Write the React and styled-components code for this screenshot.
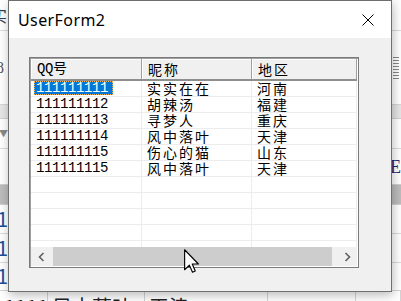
import React from 'react'
import styled, { createGlobalStyle } from 'styled-components'

const GlobalStyle = createGlobalStyle`
  html, body {
    margin: 0;
    padding: 0;
    background: #fff;
  }
  body {
    width: 401px;
    height: 301px;
    overflow: hidden;
  }
`

const mono = `"Liberation Mono", "Noto Sans CJK SC", monospace`
const cjk = `"Noto Sans CJK SC", "Liberation Sans", sans-serif`

const Screen = styled.div`
  position: relative;
  width: 401px;
  height: 301px;
  overflow: hidden;
  background: #fff;
`

// spreadsheet behind the form
const Sheet = styled.div`
  display: flex;
  flex-direction: column;
  height: 100%;
`
const Band = styled.div`
  height: ${(p) => p.h}px;
  flex: none;
  box-sizing: border-box;
  background: ${(p) => p.bg || '#fff'};
  border-bottom: 1px solid ${(p) => p.line || '#dcdcdc'};
  display: flex;
  align-items: center;
  justify-content: space-between;
  overflow: hidden;
`
const EdgeText = styled.span`
  font-family: ${(p) => (p.serif ? '"Liberation Serif", serif' : cjk)};
  font-size: ${(p) => p.size || 16}px;
  color: ${(p) => p.color || '#333'};
  margin-left: ${(p) => p.shift || 0}px;
  line-height: 1;
`
const LinesIcon = styled.div`
  width: 6px;
  height: 22px;
  margin-right: 2px;
  background: repeating-linear-gradient(#888 0 1px, transparent 1px 3px);
`
const SheetRow = styled.div`
  height: 30px;
  flex: none;
  display: flex;
  border-top: 1px solid #d4d4d4;
`
const SheetCell = styled.div`
  width: ${(p) => (p.w ? `${p.w}px` : 'auto')};
  flex: ${(p) => (p.w ? 'none' : '1')};
  box-sizing: border-box;
  border-right: 1px solid #d4d4d4;
  padding: 3px 4px 0;
  text-align: ${(p) => (p.right ? 'right' : 'left')};
  font-family: ${cjk};
  font-size: 20px;
  color: #222;
  line-height: 26px;
  white-space: nowrap;
  overflow: hidden;
`

// the user form
const Dialog = styled.div`
  position: absolute;
  left: 8px;
  top: 0;
  width: 384px;
  height: 292px;
  box-sizing: border-box;
  border: 1px solid #6f6f6f;
  background: #f0f0f0;
  box-shadow: 1px 3px 10px rgba(0, 0, 0, 0.28);
  display: flex;
  flex-direction: column;
`
const TitleBar = styled.div`
  height: 37px;
  flex: none;
  background: #fff;
  display: flex;
  align-items: center;
  justify-content: space-between;
`
const Title = styled.span`
  padding-left: 9px;
  font-family: "Noto Sans", "Open Sans", sans-serif;
  font-size: 16px;
  letter-spacing: 0.4px;
  color: #000;
`
const CloseButton = styled.div`
  width: 46px;
  height: 37px;
  display: flex;
  align-items: center;
  justify-content: center;
`
const Body = styled.div`
  flex: 1;
  padding: 19px 0 0 20px;
`
const ListBox = styled.div`
  width: 330px;
  height: 211px;
  box-sizing: border-box;
  border: 1px solid #7a7a7a;
  box-shadow: inset 1px 1px 0 #a0a0a0, inset -1px -1px 0 #fff;
  padding: 1px;
  background: #fff;
  display: flex;
  flex-direction: column;
`
const HeaderRow = styled.div`
  display: flex;
  flex: none;
  height: 22px;
  box-sizing: border-box;
  border-bottom: 2px solid #8e8e8e;
`
const HeaderCell = styled.div`
  width: ${(p) => (p.w ? `${p.w}px` : 'auto')};
  flex: ${(p) => (p.w ? 'none' : '1')};
  box-sizing: border-box;
  background: #f0f0f0;
  border-right: 1px solid #a0a0a0;
  box-shadow: inset 1px 1px 0 #fff;
  padding-left: 6px;
  font-family: ${(p) => (p.cjk ? cjk : mono)};
  font-size: 14px;
  letter-spacing: ${(p) => (p.cjk ? '2px' : '-0.4px')};
  line-height: 20px;
  color: #000;
`
const Rows = styled.div`
  flex: 1;
  overflow: hidden;
`
const Row = styled.div`
  display: flex;
  height: 16px;
`
const Cell = styled.div`
  width: ${(p) => (p.w ? `${p.w}px` : 'auto')};
  flex: ${(p) => (p.w ? 'none' : '1')};
  box-sizing: border-box;
  border-right: 1px solid #ececec;
  border-bottom: 1px solid #ececec;
  padding-left: ${(p) => (p.selected ? 3 : 5)}px;
  font-family: ${(p) => (p.cjk ? cjk : mono)};
  font-size: 14px;
  letter-spacing: ${(p) => (p.cjk ? '2px' : '-0.4px')};
  line-height: 15px;
  color: #000;
  white-space: nowrap;
`
const Selection = styled.span`
  display: inline-block;
  background: #0078d7;
  color: #fff;
  padding: 0 5px 0 2px;
  height: 14px;
  line-height: 14px;
  outline: 1px dotted #f3b35c;
  outline-offset: -1px;
`
const ScrollBar = styled.div`
  height: 19px;
  flex: none;
  display: flex;
  background: #f0f0f0;
`
const ArrowButton = styled.div`
  width: 20px;
  flex: none;
  display: flex;
  align-items: center;
  justify-content: center;
`
const Track = styled.div`
  flex: 1;
  display: flex;
  padding: 0 2px;
`
const Thumb = styled.div`
  width: 279px;
  background: #cdcdcd;
`
const Cursor = styled.svg`
  position: absolute;
  left: 184px;
  top: 249px;
`

const columns = [
  { title: 'QQ号', width: 111 },
  { title: '昵称', width: 110, cjk: true },
  { title: '地区', width: null, cjk: true },
]

const data = [
  ['111111111', '实实在在', '河南'],
  ['111111112', '胡辣汤', '福建'],
  ['111111113', '寻梦人', '重庆'],
  ['111111114', '风中落叶', '天津'],
  ['111111115', '伤心的猫', '山东'],
  ['111111115', '风中落叶', '天津'],
  ['', '', ''],
  ['', '', ''],
  ['', '', ''],
  ['', '', ''],
  ['', '', ''],
]

const Chevron = ({ left }) => (
  <svg width="7" height="10" viewBox="0 0 7 10">
    <path
      d={left ? 'M5.5 1 L1.5 5 L5.5 9' : 'M1.5 1 L5.5 5 L1.5 9'}
      fill="none"
      stroke="#606060"
      strokeWidth="1.6"
    />
  </svg>
)

const App = () => {
  return (
    <>
      <GlobalStyle />
      <Screen>
        <Sheet>
          <Band h={31}>
            <EdgeText shift={-9} color="#2f3f5a">实</EdgeText>
          </Band>
          <Band h={74} line="#d6d6d6">
            <EdgeText serif size={16} shift={-4} color="#555">8</EdgeText>
            <LinesIcon />
          </Band>
          <Band h={14} bg="#e6e6e6" line="#d0d0d0" />
          <Band h={30}>
            <EdgeText size={9} shift={-1} color="#8a8a8a">▼</EdgeText>
          </Band>
          <Band h={36} line="#d0d0d0">
            <span />
            <EdgeText serif size={18} color="#1a2a70">E</EdgeText>
          </Band>
          <Band h={20} bg="#bdbdbd" line="#d0d0d0" />
          <Band h={29}>
            <EdgeText size={20} shift={-3} color="#1d4d9a">1</EdgeText>
          </Band>
          <Band h={29}>
            <EdgeText size={20} shift={-3} color="#1d4d9a">1</EdgeText>
          </Band>
          <Band h={27} line="#ffffff">
            <EdgeText size={20} shift={-3} color="#1d4d9a">1</EdgeText>
          </Band>
          <SheetRow>
            <SheetCell w={48} right>111114</SheetCell>
            <SheetCell w={97}>风中落叶</SheetCell>
            <SheetCell w={123}>天津</SheetCell>
            <SheetCell w={88} />
            <SheetCell />
          </SheetRow>
        </Sheet>

        <Dialog>
          <TitleBar>
            <Title>UserForm2</Title>
            <CloseButton>
              <svg width="12" height="12" viewBox="0 0 12 12">
                <path d="M0.5 0.5 L11.5 11.5 M11.5 0.5 L0.5 11.5" stroke="#000" strokeWidth="1" />
              </svg>
            </CloseButton>
          </TitleBar>
          <Body>
            <ListBox>
              <HeaderRow>
                {columns.map((c) => (
                  <HeaderCell key={c.title} w={c.width} cjk={c.cjk}>
                    {c.title}
                  </HeaderCell>
                ))}
              </HeaderRow>
              <Rows>
                {data.map((r, i) => (
                  <Row key={i}>
                    {r.map((v, j) => (
                      <Cell key={j} w={columns[j].width} cjk={columns[j].cjk} selected={i === 0 && j === 0}>
                        {i === 0 && j === 0 ? <Selection>{v}</Selection> : v}
                      </Cell>
                    ))}
                  </Row>
                ))}
              </Rows>
              <ScrollBar>
                <ArrowButton>
                  <Chevron left />
                </ArrowButton>
                <Track>
                  <Thumb />
                </Track>
                <ArrowButton>
                  <Chevron />
                </ArrowButton>
              </ScrollBar>
            </ListBox>
          </Body>
        </Dialog>

        <Cursor width="15" height="24" viewBox="0 0 12 19">
          <path
            d="M0.5 0.5 L0.5 16.5 L4.3 12.8 L6.8 18.5 L9 17.5 L6.6 11.9 L11.5 11.9 Z"
            fill="#fff"
            stroke="#000"
            strokeWidth="0.9"
            strokeLinejoin="round"
          />
        </Cursor>
      </Screen>
    </>
  )
}

export default App
